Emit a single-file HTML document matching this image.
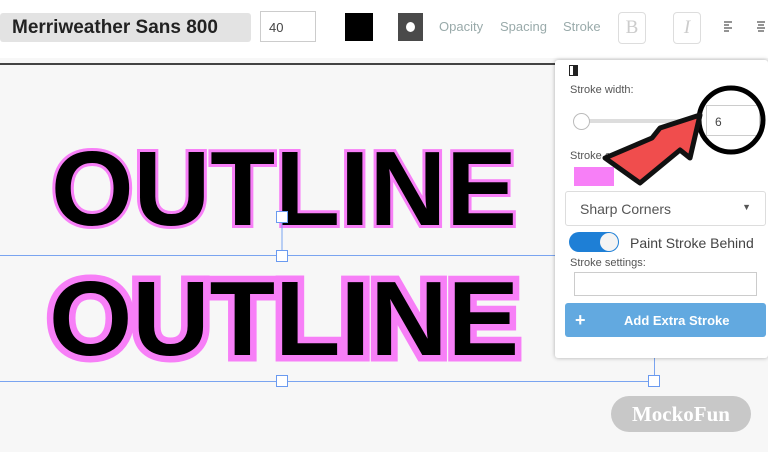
<!DOCTYPE html>
<html><head><style>
body{margin:0;width:768px;height:452px;overflow:hidden;background:#f7f7f7;font-family:"Liberation Sans",sans-serif;position:relative}
.abs{position:absolute}
</style></head><body>
<div class="abs" style="left:0;top:0;width:768px;height:58px;background:#fff"></div>
<div class="abs" style="left:0;top:13px;width:251px;height:29px;background:#e3e3e3;border-radius:3px"></div>
<div class="abs" style="left:12px;top:17px;font-size:19px;font-weight:bold;color:#222">Merriweather Sans 800</div>
<div class="abs" style="left:260px;top:11px;width:56px;height:31px;border:1px solid #ccc;background:#fff;box-sizing:border-box;font-size:13px;color:#444;padding:8px 0 0 8px">40</div>
<div class="abs" style="left:345px;top:13px;width:28px;height:28px;background:#000"></div>
<div class="abs" style="left:398px;top:13px;width:25px;height:28px;background:#4a4a4a"><div class="abs" style="left:8px;top:9px;width:9px;height:10px;border-radius:50%;background:#fff"></div></div>
<div class="abs" style="left:439px;top:19px;font-size:13px;color:#9aa">Opacity</div>
<div class="abs" style="left:500px;top:19px;font-size:13px;color:#9aa">Spacing</div>
<div class="abs" style="left:563px;top:19px;font-size:13px;color:#9aa">Stroke</div>
<div class="abs" style="left:618px;top:12px;width:26px;height:30px;border:1px solid #ddd;border-radius:4px;font-family:'Liberation Serif';font-size:19px;color:#ccc;text-align:center;line-height:30px">B</div>
<div class="abs" style="left:673px;top:12px;width:26px;height:30px;border:1px solid #ddd;border-radius:4px;font-family:'Liberation Serif';font-style:italic;font-size:19px;color:#ccc;text-align:center;line-height:30px">I</div>
<svg class="abs" style="left:720px;top:20px" width="48" height="14"><g stroke="#555" stroke-width="1.2"><path d="M4 2h8M4 5h5M4 8h8M4 11h5M756 0"/><path d="M37 2h8M38 5h6M37 8h8M38 11h6"/></g></svg>
<div class="abs" style="left:0;top:63px;width:560px;height:2px;background:#444"></div>

<svg class="abs" style="left:0;top:0" width="768" height="452">
<g font-family="Liberation Sans" font-weight="bold" font-size="106" stroke-linejoin="miter">
<text x="51" y="225" textLength="466" lengthAdjust="spacingAndGlyphs" fill="#000" stroke="#f77ff7" stroke-width="6" paint-order="stroke">OUTLINE</text>
<text x="49" y="355" textLength="470" lengthAdjust="spacingAndGlyphs" fill="#000" stroke="#f77ff7" stroke-width="13" paint-order="stroke">OUTLINE</text>
</g>
<line x1="0" y1="255.5" x2="560" y2="255.5" stroke="#7aa4f0"/>
<line x1="0" y1="381.5" x2="654" y2="381.5" stroke="#7aa4f0"/>
<line x1="282" y1="222" x2="282" y2="252" stroke="#7aa4f0"/>
<line x1="654.5" y1="356" x2="654.5" y2="376" stroke="#7aa4f0"/>
<g fill="#fff" stroke="#6a9af0">
<rect x="276.5" y="211.5" width="11" height="11"/>
<rect x="276.5" y="250.5" width="11" height="11"/>
<rect x="276.5" y="375.5" width="11" height="11"/>
<rect x="648.5" y="375.5" width="11" height="11"/>
</g>
</svg>

<div class="abs" style="left:555px;top:60px;width:213px;height:298px;background:#fff;box-shadow:0 0 4px rgba(0,0,0,.3);border-radius:3px"></div>
<div class="abs" style="left:569px;top:65px;width:9px;height:11px;border:1px solid #222;box-sizing:border-box;border-right:5px solid #222"></div>
<div class="abs" style="left:570px;top:84px;font-size:11px;color:#555">Stroke width:</div>
<div class="abs" style="left:580px;top:119px;width:120px;height:4px;background:#ddd;border-radius:2px"></div>
<div class="abs" style="left:573px;top:113px;width:15px;height:15px;border-radius:50%;background:#fff;border:1px solid #bbb"></div>
<div class="abs" style="left:706px;top:105px;width:54px;height:31px;border:1px solid #ccc;box-sizing:border-box;font-size:12px;color:#444;padding:9px 0 0 8px">6</div>
<div class="abs" style="left:570px;top:150px;font-size:11px;color:#555">Stroke color</div>
<div class="abs" style="left:574px;top:167px;width:40px;height:19px;background:#f77ff7"></div>
<div class="abs" style="left:565px;top:191px;width:201px;height:35px;border:1px solid #ddd;border-radius:3px;box-sizing:border-box;font-size:14px;color:#555;padding:9px 0 0 14px">Sharp Corners<span style="position:absolute;right:14px;top:10px;font-size:9px">▼</span></div>
<div class="abs" style="left:569px;top:232px;width:50px;height:20px;background:#1e7fd6;border-radius:10px"><div class="abs" style="right:1px;top:1px;width:18px;height:18px;border-radius:50%;background:#f4f4f4"></div></div>
<div class="abs" style="left:630px;top:235px;font-size:14px;color:#444">Paint Stroke Behind</div>
<div class="abs" style="left:570px;top:257px;font-size:11px;color:#555">Stroke settings:</div>
<div class="abs" style="left:574px;top:272px;width:183px;height:24px;border:1px solid #ccc;box-sizing:border-box"></div>
<div class="abs" style="left:565px;top:303px;width:201px;height:34px;background:#62a9e0;border-radius:3px"></div>
<div class="abs" style="left:575px;top:310px;font-size:18px;font-weight:bold;color:#fff">+</div>
<div class="abs" style="left:624px;top:313px;font-size:13px;font-weight:bold;color:#fff">Add Extra Stroke</div>

<svg class="abs" style="left:0;top:0" width="768" height="452">
<circle cx="731" cy="120" r="32" fill="none" stroke="#000" stroke-width="5"/>
<path d="M605 158 L652 138 L660 128 L700 115 L690 158 L680 150 L640 183 Z" fill="#f04d4d" stroke="#111" stroke-width="5" stroke-linejoin="round"/>
</svg>

<div class="abs" style="left:611px;top:396px;width:140px;height:36px;border-radius:18px;background:#c8c8c8;color:#fff;font-family:'Liberation Serif';font-weight:bold;font-size:21px;text-align:center;line-height:36px">MockoFun</div>
</body></html>
